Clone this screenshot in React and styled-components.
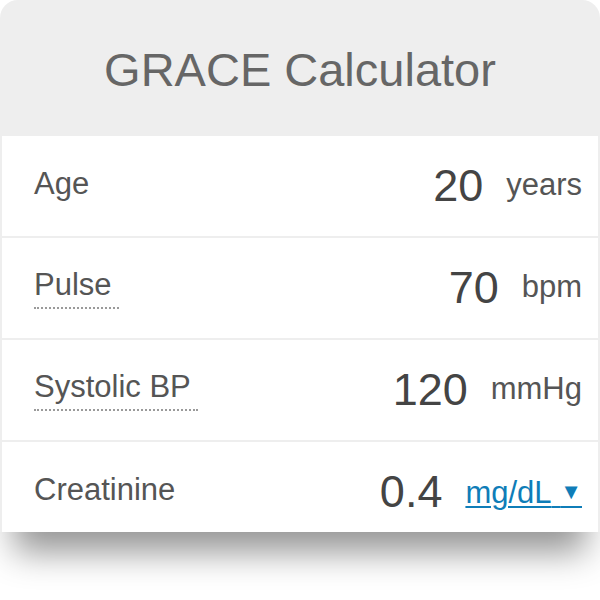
import React from "react";
import styled, { createGlobalStyle } from "styled-components";

const GlobalStyle = createGlobalStyle`
  html, body {
    margin: 0;
    padding: 0;
    background: #ffffff;
    font-family: "Liberation Sans", Arial, sans-serif;
  }
`;

const rows = [
  { label: "Age", value: "20", unit: "years" },
  { label: "Pulse", value: "70", unit: "bpm", dotted: true },
  { label: "Systolic BP", value: "120", unit: "mmHg", dotted: true },
  { label: "Creatinine", value: "0.4", unit: "mg/dL", select: true },
];

function App() {
  return (
    <>
      <GlobalStyle />
      <Page>
        <Card>
          <Header>
            <h1>GRACE Calculator</h1>
          </Header>
          <Body>
            {rows.map((row) => (
              <Row key={row.label}>
                <Label $dotted={row.dotted}>{row.label}</Label>
                <Field>
                  <Value>{row.value}</Value>
                  {row.select ? (
                    <UnitSelect>
                      {row.unit}&nbsp;<span className="arrow">▼</span>
                    </UnitSelect>
                  ) : (
                    <Unit>{row.unit}</Unit>
                  )}
                </Field>
              </Row>
            ))}
          </Body>
        </Card>
      </Page>
    </>
  );
}

export default App;

const Page = styled.div`
  width: 600px;
  height: 600px;
  overflow: hidden;
  background: #ffffff;
`;

const Card = styled.div`
  width: 600px;
  height: 532px;
  overflow: hidden;
  background: #eeeeee;
  border-radius: 18px 18px 0 0;
  box-shadow: 0 34px 34px -14px rgba(0, 0, 0, 0.42);
`;

const Header = styled.div`
  height: 136px;
  display: flex;
  align-items: center;
  justify-content: center;
  h1 {
    margin: 0;
    padding-top: 2px;
    font-weight: normal;
    font-size: 47px;
    color: #666666;
  }
`;

const Body = styled.div`
  display: flex;
  flex-direction: column;
  gap: 2px;
  padding: 0 2px;
`;

const Row = styled.div`
  flex: none;
  height: 100px;
  background: #ffffff;
  display: flex;
  align-items: center;
  justify-content: space-between;
  padding: 0 16px 0 32px;
`;

const Label = styled.span`
  font-size: 31px;
  line-height: 36px;
  color: #555555;
  padding-right: ${(p) => (p.$dotted ? "7px" : "0")};
  padding-bottom: ${(p) => (p.$dotted ? "4px" : "0")};
  border-bottom: ${(p) => (p.$dotted ? "2px dotted #9a9a9a" : "none")};
  margin-top: ${(p) => (p.$dotted ? "4px" : "0")};
  margin-bottom: 4px;
`;

const Field = styled.div`
  display: flex;
  align-items: center;
  gap: 23px;
`;

const Value = styled.span`
  font-size: 45px;
  line-height: 50px;
  color: #444444;
`;

const Unit = styled.span`
  font-size: 31px;
  line-height: 36px;
  color: #555555;
  margin-bottom: 2px;
`;

const UnitSelect = styled.span`
  font-size: 31px;
  line-height: 36px;
  color: #0f7db8;
  text-decoration: underline;
  text-decoration-thickness: 2px;
  text-underline-offset: 3px;
  cursor: pointer;
  .arrow {
    font-size: 22px;
    vertical-align: 4px;
  }
`;
